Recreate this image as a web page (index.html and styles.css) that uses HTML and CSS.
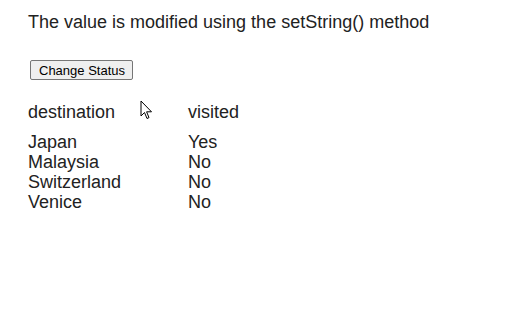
FILE: index.html
```html
<!DOCTYPE html>
<html lang="en">
<head>
  <meta charset="UTF-8" />
  <title>setString</title>
  <link rel="stylesheet" href="styles.css">
</head>
<body>
  <div class="page">
    <p class="intro">The value is modified using the setString() method</p>
    <button class="status-btn">Change Status</button>
    <table class="places">
      <thead>
        <tr><th>destination</th><th>visited</th></tr>
      </thead>
      <tbody>
        <tr><td>Japan</td><td>Yes</td></tr>
        <tr><td>Malaysia</td><td>No</td></tr>
        <tr><td>Switzerland</td><td>No</td></tr>
        <tr><td>Venice</td><td>No</td></tr>
      </tbody>
    </table>
    <svg class="cursor" width="14" height="22" viewBox="0 0 14 22">
      <path d="M1 1 L1 16 L4.5 12.5 L7 18.5 L9 17.6 L6.6 11.8 L11.5 11.8 Z" fill="#fff" stroke="#000" stroke-width="1" stroke-linejoin="round"/>
    </svg>
  </div>
</body>
</html>
```

FILE: styles.css
```css
body {
  margin: 0;
  background: #fff;
  font-family: "Liberation Sans", Arial, sans-serif;
  color: #222;
}
.page {
  position: relative;
  padding: 12px 28px;
}
.intro {
  margin: 0 0 28px;
  font-size: 18px;
  line-height: 20px;
}
.status-btn {
  margin-left: 2px;
  font-family: "Liberation Sans", Arial, sans-serif;
  font-size: 13px;
  padding: 2px 7px 1px 8px;
  background: #efefef;
  border: 1px solid #767676;
  border-radius: 2px;
  color: #000;
}
.places {
  margin-top: 22px;
  border-collapse: collapse;
  font-size: 18px;
}
.places th {
  font-weight: normal;
  text-align: left;
  padding: 0 0 10px;
  line-height: 20px;
}
.places td {
  padding: 0;
  line-height: 20px;
}
.places th:first-child,
.places td:first-child {
  width: 160px;
}
.cursor {
  position: absolute;
  left: 140px;
  top: 100px;
}
```
